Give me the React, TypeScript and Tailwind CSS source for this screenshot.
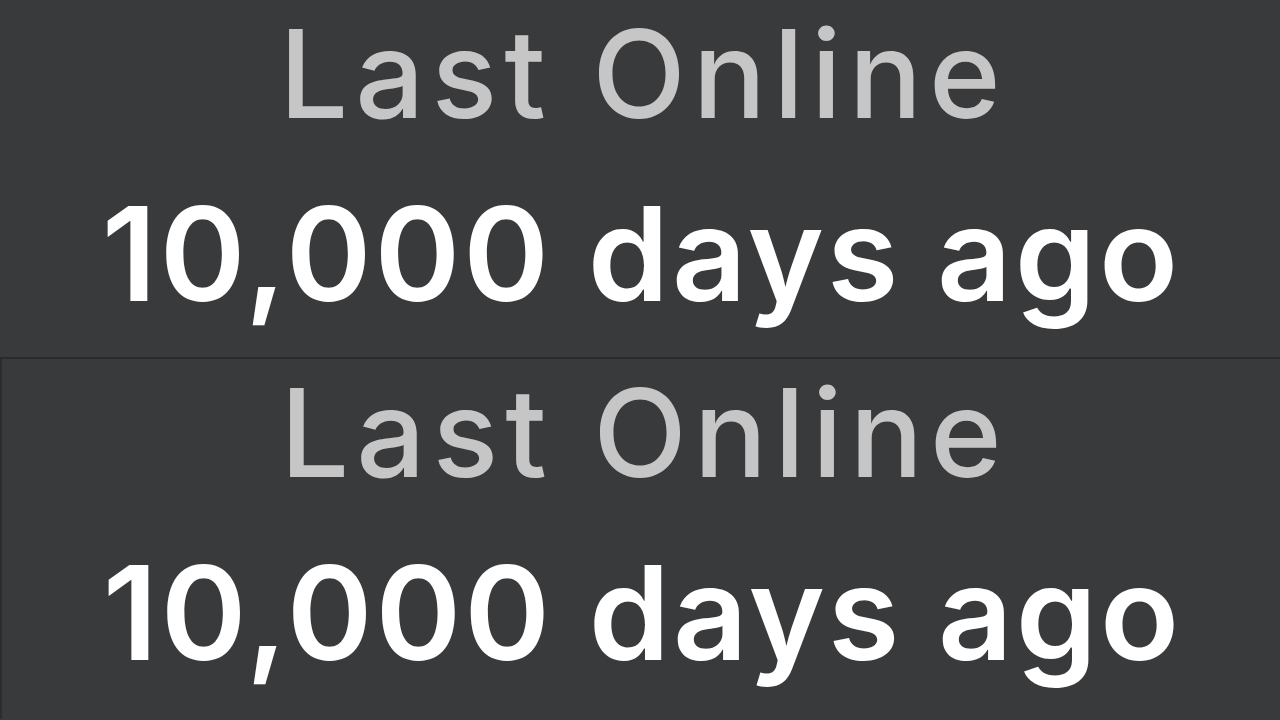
import React from 'react';

const LastOnlineCard = ({ edge = false }: { edge?: boolean }) => (
  <div
    className={`h-[360px] bg-[#393a3c] flex flex-col items-center ${edge ? 'border-l-2 border-[#2c2d2f]' : ''}`}
  >
    <div className="mt-[4px] text-[122px] leading-[140px] font-medium text-[#c6c6c6] tracking-[7px] pl-[7px]">
      Last Online
    </div>
    <div className="mt-[40px] text-[130px] leading-[140px] font-semibold text-white tracking-[3px] pl-[3px]">
      10,000 days ago
    </div>
  </div>
);

const App = () => {
  return (
    <div className="w-[1280px] h-[720px] overflow-hidden bg-[#393a3c] flex flex-col font-['Inter',sans-serif]">
      <LastOnlineCard />
      <div className="h-[2px] bg-[#2a2b2c] -mt-[3px]" />
      <LastOnlineCard edge />
    </div>
  );
};

export default App;
